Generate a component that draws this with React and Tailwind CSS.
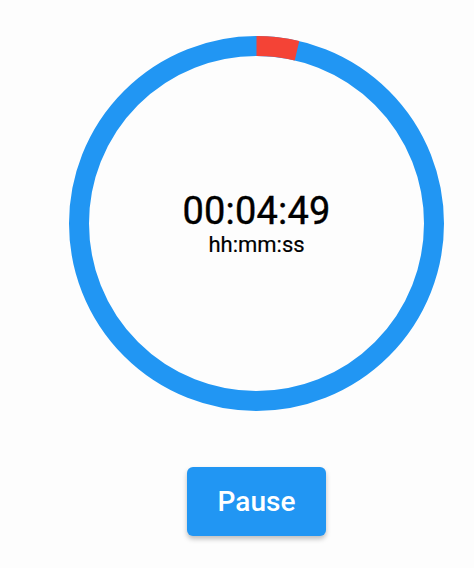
import React from 'react';

const SIZE = 375;
const STROKE = 20;
const R = (SIZE - STROKE) / 2;
const C = 2 * Math.PI * R;

const TimerRing = ({ elapsed }) => {
  const dash = C * elapsed;
  return (
    <svg width={SIZE} height={SIZE} viewBox={`0 0 ${SIZE} ${SIZE}`} className="block">
      <circle cx={SIZE / 2} cy={SIZE / 2} r={R} fill="none" stroke="#2196F3" strokeWidth={STROKE} />
      <circle
        cx={SIZE / 2}
        cy={SIZE / 2}
        r={R}
        fill="none"
        stroke="#F44336"
        strokeWidth={STROKE}
        strokeDasharray={`${dash} ${C}`}
        transform={`rotate(-90 ${SIZE / 2} ${SIZE / 2})`}
      />
    </svg>
  );
};

export default function App() {
  return (
    <div
      className="w-[474px] h-[568px] bg-[#fdfdfd] flex flex-col items-center pt-[36px] pl-[39px] overflow-hidden"
      style={{ fontFamily: 'Roboto, "Noto Sans", sans-serif' }}
    >
      <div className="relative w-[375px] h-[375px]">
        <TimerRing elapsed={11 / 300} />
        <div className="absolute inset-0 flex flex-col items-center justify-center text-black">
          <p className="text-[38px] leading-[40px] tracking-[0.2px] [-webkit-text-stroke:0.4px_black]">00:04:49</p>
          <p className="text-[22px] leading-[24px] mt-[2px] [-webkit-text-stroke:0.2px_black]">hh:mm:ss</p>
        </div>
      </div>
      <button className="mt-[56px] w-[139px] h-[69px] bg-[#2196F3] rounded-[6px] text-white text-[28px] font-medium shadow-[0_3px_5px_rgba(0,0,0,0.25)]">
        Pause
      </button>
    </div>
  );
}
